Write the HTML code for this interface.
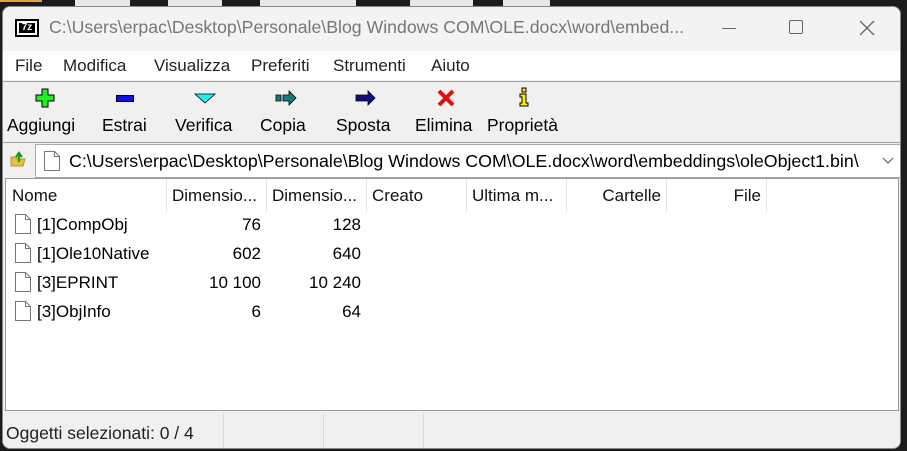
<!DOCTYPE html>
<html><head><meta charset="utf-8"><style>
*{margin:0;padding:0;box-sizing:border-box}
body{width:907px;height:451px;background:#1c1c1c;font-family:"Liberation Sans",sans-serif;font-size:17px;color:#000;position:relative;overflow:hidden}
.p{position:absolute}
.lt{background:#e8e8e8;top:0;height:6px}
#win{left:2px;top:6px;width:899px;height:443px;background:#f0f0f0;border:1px solid #888;border-radius:8px;overflow:hidden}
#title{left:0;top:0;width:899px;height:44px;background:#f3f3f3}
#menu{left:0;top:44px;width:899px;height:29px;background:#fff}
#menu span{position:absolute;top:5px;color:#222;font-size:17px}
#tb{left:0;top:74px;width:899px;height:62px;background:#f0f0f0;border-top:1px solid #a0a0a0;border-bottom:1px solid #a0a0a0}
.tl{position:absolute;top:33px;font-size:17.5px}
#addr{left:32px;top:137px;width:866px;height:34px;background:#fff;border:1px solid #aaa}
#list{left:2px;top:171px;width:894px;height:233px;background:#fff;border:1px solid #999}
.h{position:absolute;top:0;height:33px;border-right:1px solid #e4e4e4;line-height:33px;padding:0 5px;color:#111;white-space:nowrap;overflow:hidden;font-size:17px}
.r{position:absolute;font-size:17px}
#st{left:0;top:404px;width:899px;height:39px;background:#f0f0f0}
.sep{position:absolute;top:2px;height:36px;border-left:1px solid #d8d8d8}
.fi{position:absolute;width:16px;height:20px}
</style></head><body>
<div class="p" style="left:0;top:0;width:42px;height:2px;background:#e8a23a"></div>
<div class="p lt" style="left:75px;width:55px"></div>
<div class="p lt" style="left:168px;width:54px"></div>
<div class="p lt" style="left:260px;width:96px"></div>
<div class="p lt" style="left:410px;width:63px"></div>
<div class="p lt" style="left:503px;width:47px"></div>
<div id="win" class="p">
 <div id="title" class="p">
  <div class="p" style="left:12px;top:12px;width:24px;height:18px;border:2px solid #000;background:#fff"><div style="position:absolute;left:2px;top:2px;width:16px;height:10px;background:#000;color:#fff;font:bold 10px/10px 'Liberation Sans';text-align:center">7z</div></div>
  <div class="p" style="left:46px;top:10px;color:#777;font-size:17.7px;white-space:nowrap">C:\Users\erpac\Desktop\Personale\Blog Windows COM\OLE.docx\word\embed...</div>
  <div class="p" style="left:719px;top:21px;width:14px;height:1px;background:#666"></div>
  <div class="p" style="left:786px;top:13px;width:14px;height:14px;border:1px solid #666;border-radius:2px"></div>
  <svg class="p" style="left:856px;top:13px" width="16" height="16"><path d="M1 1L15 15M15 1L1 15" stroke="#666" stroke-width="1.3"/></svg>
 </div>
 <div id="menu" class="p">
  <span style="left:12px">File</span><span style="left:60px">Modifica</span><span style="left:151px">Visualizza</span><span style="left:248px">Preferiti</span><span style="left:330px">Strumenti</span><span style="left:428px">Aiuto</span>
 </div>
 <div id="tb" class="p">
  <svg class="p" style="left:32px;top:6px" width="22" height="22"><path d="M7 1h6v6h6v6h-6v6h-6v-6h-6v-6h6z" fill="#22ee22" stroke="#000"/></svg>
  <div class="p" style="left:113px;top:13px;width:18px;height:7px;background:#1010e0;border:1px solid #000"></div>
  <svg class="p" style="left:191px;top:11px" width="22" height="12"><path d="M1 1h20l-10 9z" fill="#22eeee" stroke="#000" stroke-width=".8"/></svg>
  <svg class="p" style="left:272px;top:8px" width="22" height="16"><path d="M1 5h5v6h-5zM8 5h6v-4l7 7-7 7v-4h-6z" fill="#1a7a7a" stroke="#000" stroke-width=".8"/></svg>
  <svg class="p" style="left:352px;top:8px" width="22" height="16"><path d="M1 5h12v-4l7 7-7 7v-4h-12z" fill="#10107a" stroke="#000" stroke-width=".8"/></svg>
  <svg class="p" style="left:434px;top:7px" width="18" height="18"><path d="M2 2L16 16M16 2L2 16" stroke="#e01010" stroke-width="4"/></svg>
  <svg class="p" style="left:514px;top:5px" width="14" height="20"><path d="M5 1h4v4h-4zM3 7h6v9h2v3h-8v-3h2v-6h-2z" fill="#ffee00" stroke="#000" stroke-width="1"/></svg>
  <span class="tl" style="left:4px">Aggiungi</span><span class="tl" style="left:99px">Estrai</span><span class="tl" style="left:172px">Verifica</span><span class="tl" style="left:257px">Copia</span><span class="tl" style="left:333px">Sposta</span><span class="tl" style="left:412px">Elimina</span><span class="tl" style="left:484px">Proprietà</span>
 </div>
 <svg class="p" style="left:7px;top:144px" width="16" height="16"><path d="M1 6h5l1 2h8l-2 7h-12z" fill="#e8c040" stroke="#a08020" stroke-width=".7"/><path d="M9 11V4M6 6l3-4 3 4" stroke="#1a9a1a" stroke-width="2.2" fill="none"/></svg>
 <div id="addr" class="p">
  <svg class="fi" style="left:8px;top:6px" viewBox="0 0 16 20"><path d="M.5 .5h10l5 5v14h-15z" fill="#fff" stroke="#777"/><path d="M10.5 .5v5h5" fill="none" stroke="#777"/></svg>
  <div class="p" style="left:33px;top:6px;white-space:nowrap;font-size:17.8px">C:\Users\erpac\Desktop\Personale\Blog Windows COM\OLE.docx\word\embeddings\oleObject1.bin\</div>
  <svg class="p" style="left:846px;top:12px" width="12" height="8"><path d="M1 1l5 5 5-5" stroke="#555" fill="none"/></svg>
 </div>
 <div id="list" class="p">
  <div class="h" style="left:0;width:161px;padding-left:6px">Nome</div>
  <div class="h" style="left:161px;width:100px">Dimensio...</div>
  <div class="h" style="left:261px;width:100px">Dimensio...</div>
  <div class="h" style="left:361px;width:100px">Creato</div>
  <div class="h" style="left:461px;width:100px">Ultima m...</div>
  <div class="h" style="left:561px;width:100px;text-align:right">Cartelle</div>
  <div class="h" style="left:661px;width:100px;text-align:right">File</div>
  <svg class="fi" style="left:9px;top:35px" viewBox="0 0 16 20"><path d="M.5 .5h10l5 5v14h-15z" fill="#fff" stroke="#777"/><path d="M10.5 .5v5h5" fill="none" stroke="#777"/></svg><span class="r" style="left:31px;top:36px">[1]CompObj</span><span class="r" style="left:161px;width:94px;text-align:right;top:36px">76</span><span class="r" style="left:261px;width:94px;text-align:right;top:36px">128</span>
  <svg class="fi" style="left:9px;top:64px" viewBox="0 0 16 20"><path d="M.5 .5h10l5 5v14h-15z" fill="#fff" stroke="#777"/><path d="M10.5 .5v5h5" fill="none" stroke="#777"/></svg><span class="r" style="left:31px;top:65px">[1]Ole10Native</span><span class="r" style="left:161px;width:94px;text-align:right;top:65px">602</span><span class="r" style="left:261px;width:94px;text-align:right;top:65px">640</span>
  <svg class="fi" style="left:9px;top:93px" viewBox="0 0 16 20"><path d="M.5 .5h10l5 5v14h-15z" fill="#fff" stroke="#777"/><path d="M10.5 .5v5h5" fill="none" stroke="#777"/></svg><span class="r" style="left:31px;top:94px">[3]EPRINT</span><span class="r" style="left:161px;width:94px;text-align:right;top:94px">10 100</span><span class="r" style="left:261px;width:94px;text-align:right;top:94px">10 240</span>
  <svg class="fi" style="left:9px;top:122px" viewBox="0 0 16 20"><path d="M.5 .5h10l5 5v14h-15z" fill="#fff" stroke="#777"/><path d="M10.5 .5v5h5" fill="none" stroke="#777"/></svg><span class="r" style="left:31px;top:123px">[3]ObjInfo</span><span class="r" style="left:161px;width:94px;text-align:right;top:123px">6</span><span class="r" style="left:261px;width:94px;text-align:right;top:123px">64</span>
 </div>
 <div id="st" class="p">
  <span class="p" style="left:3px;top:12px;font-size:17.5px;color:#222">Oggetti selezionati: 0 / 4</span>
  <div class="sep" style="left:220px"></div><div class="sep" style="left:320px"></div><div class="sep" style="left:420px"></div>
 </div>
</div>
</body></html>
